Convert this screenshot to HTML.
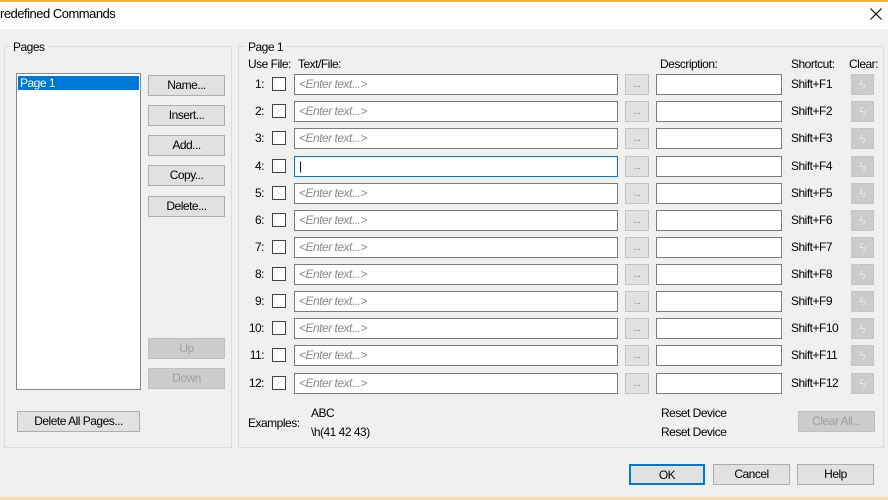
<!DOCTYPE html><html><head><style>
*{box-sizing:border-box;margin:0;padding:0}
body{width:888px;height:500px;background:#f0f0f0;position:relative;overflow:hidden;font-family:"Liberation Sans",sans-serif;font-size:12px;color:#000;letter-spacing:-0.5px}
.a{position:absolute}
.btn{position:absolute;background:#e1e1e1;border:1px solid #adadad;text-align:center;line-height:19px;height:21px}
.dis{color:#a0a0a0;background:#cccccc;border-color:#bfbfbf}
.grp{position:absolute;border:1px solid #dcdcdc}
.in{position:absolute;background:#fff;border:1px solid #7a7a7a;height:21px;width:324px;left:294px;font-style:italic;color:#8a8a8a;padding-left:4px;line-height:19px}
.dd{position:absolute;left:656px;width:126px;height:21px;background:#fff;border:1px solid #7a7a7a}
.el{position:absolute;left:625px;width:24px;height:21px;background:#e1e1e1;border:1px solid #c2c2c2;color:#888;text-align:center;line-height:19px;font-size:10px}
.cb{position:absolute;left:272px;width:14px;height:14px;border:1px solid #444;background:#fff}
.lb{position:absolute;left:240px;width:24px;text-align:right}
.sc{position:absolute;left:791px}
.cl{position:absolute;left:851px;width:23px;height:21px;background:#cccccc;border:1px solid #c4c4c4;color:#e6e6e6;text-align:center;font-size:13px;line-height:19px}
</style></head><body>
<div class="a" style="left:0;top:0;width:888px;height:2px;background:#f0b040"></div>
<div class="a" style="left:0;top:2px;width:888px;height:27px;background:#fff"></div>
<div class="a" style="left:0;top:6px;font-size:13px">redefined Commands</div>
<svg class="a" style="left:870px;top:8px" width="12" height="12"><path d="M0.5 0.5L11.5 11.5M11.5 0.5L0.5 11.5" stroke="#000" stroke-width="1.1"/></svg>
<div class="a" style="left:0;top:497px;width:888px;height:3px;background:#f5deb0"></div>

<div class="grp" style="left:4px;top:46px;width:228px;height:402px"></div>
<div class="a" style="left:10px;top:40px;background:#f0f0f0;padding:0 3px">Pages</div>
<div class="a" style="left:16px;top:73px;width:125px;height:317px;background:#fff;border:1px solid #828790"></div>
<div class="a" style="left:18px;top:76px;width:121px;height:14px;background:#0078d7;color:#fff;padding-left:2px;line-height:14px">Page 1</div>
<div class="btn" style="left:148px;top:75px;width:77px">Name...</div>
<div class="btn" style="left:148px;top:105px;width:77px">Insert...</div>
<div class="btn" style="left:148px;top:135px;width:77px">Add...</div>
<div class="btn" style="left:148px;top:165px;width:77px">Copy...</div>
<div class="btn" style="left:148px;top:196px;width:77px">Delete...</div>
<div class="btn dis" style="left:148px;top:338px;width:77px">Up</div>
<div class="btn dis" style="left:148px;top:368px;width:77px">Down</div>
<div class="btn" style="left:17px;top:411px;width:123px">Delete All Pages...</div>

<div class="grp" style="left:238px;top:46px;width:646px;height:402px"></div>
<div class="a" style="left:245px;top:40px;background:#f0f0f0;padding:0 3px">Page 1</div>
<div class="a" style="left:248px;top:57px">Use File:</div>
<div class="a" style="left:298px;top:57px">Text/File:</div>
<div class="a" style="left:660px;top:57px">Description:</div>
<div class="a" style="left:791px;top:57px">Shortcut:</div>
<div class="a" style="left:849px;top:57px">Clear:</div>

<div class="lb" style="top:77px">1:</div><div class="cb" style="top:77px"></div><div class="in" style="top:74px">&lt;Enter text...&gt;</div><div class="el" style="top:74px">...</div><div class="dd" style="top:74px"></div><div class="sc" style="top:77px">Shift+F1</div><div class="cl" style="top:74px">ϟ</div>
<div class="lb" style="top:104px">2:</div><div class="cb" style="top:104px"></div><div class="in" style="top:101px">&lt;Enter text...&gt;</div><div class="el" style="top:101px">...</div><div class="dd" style="top:101px"></div><div class="sc" style="top:104px">Shift+F2</div><div class="cl" style="top:101px">ϟ</div>
<div class="lb" style="top:131px">3:</div><div class="cb" style="top:131px"></div><div class="in" style="top:128px">&lt;Enter text...&gt;</div><div class="el" style="top:128px">...</div><div class="dd" style="top:128px"></div><div class="sc" style="top:131px">Shift+F3</div><div class="cl" style="top:128px">ϟ</div>
<div class="lb" style="top:159px">4:</div><div class="cb" style="top:159px"></div><div class="in" style="top:156px;border-color:#0078d7;color:#000;font-style:normal">|</div><div class="el" style="top:156px">...</div><div class="dd" style="top:156px"></div><div class="sc" style="top:159px">Shift+F4</div><div class="cl" style="top:156px">ϟ</div>
<div class="lb" style="top:186px">5:</div><div class="cb" style="top:186px"></div><div class="in" style="top:183px">&lt;Enter text...&gt;</div><div class="el" style="top:183px">...</div><div class="dd" style="top:183px"></div><div class="sc" style="top:186px">Shift+F5</div><div class="cl" style="top:183px">ϟ</div>
<div class="lb" style="top:213px">6:</div><div class="cb" style="top:213px"></div><div class="in" style="top:210px">&lt;Enter text...&gt;</div><div class="el" style="top:210px">...</div><div class="dd" style="top:210px"></div><div class="sc" style="top:213px">Shift+F6</div><div class="cl" style="top:210px">ϟ</div>
<div class="lb" style="top:240px">7:</div><div class="cb" style="top:240px"></div><div class="in" style="top:237px">&lt;Enter text...&gt;</div><div class="el" style="top:237px">...</div><div class="dd" style="top:237px"></div><div class="sc" style="top:240px">Shift+F7</div><div class="cl" style="top:237px">ϟ</div>
<div class="lb" style="top:267px">8:</div><div class="cb" style="top:267px"></div><div class="in" style="top:264px">&lt;Enter text...&gt;</div><div class="el" style="top:264px">...</div><div class="dd" style="top:264px"></div><div class="sc" style="top:267px">Shift+F8</div><div class="cl" style="top:264px">ϟ</div>
<div class="lb" style="top:294px">9:</div><div class="cb" style="top:294px"></div><div class="in" style="top:291px">&lt;Enter text...&gt;</div><div class="el" style="top:291px">...</div><div class="dd" style="top:291px"></div><div class="sc" style="top:294px">Shift+F9</div><div class="cl" style="top:291px">ϟ</div>
<div class="lb" style="top:321px">10:</div><div class="cb" style="top:321px"></div><div class="in" style="top:318px">&lt;Enter text...&gt;</div><div class="el" style="top:318px">...</div><div class="dd" style="top:318px"></div><div class="sc" style="top:321px">Shift+F10</div><div class="cl" style="top:318px">ϟ</div>
<div class="lb" style="top:348px">11:</div><div class="cb" style="top:348px"></div><div class="in" style="top:345px">&lt;Enter text...&gt;</div><div class="el" style="top:345px">...</div><div class="dd" style="top:345px"></div><div class="sc" style="top:348px">Shift+F11</div><div class="cl" style="top:345px">ϟ</div>
<div class="lb" style="top:376px">12:</div><div class="cb" style="top:376px"></div><div class="in" style="top:373px">&lt;Enter text...&gt;</div><div class="el" style="top:373px">...</div><div class="dd" style="top:373px"></div><div class="sc" style="top:376px">Shift+F12</div><div class="cl" style="top:373px">ϟ</div>

<div class="a" style="left:248px;top:416px">Examples:</div>
<div class="a" style="left:311px;top:406px">ABC</div>
<div class="a" style="left:311px;top:425px">\h(41 42 43)</div>
<div class="a" style="left:661px;top:406px">Reset Device</div>
<div class="a" style="left:661px;top:425px">Reset Device</div>
<div class="btn dis" style="left:798px;top:411px;width:77px">Clear All...</div>

<div class="btn" style="left:629px;top:464px;width:76px;border:2px solid #0078d7;line-height:18px">OK</div>
<div class="btn" style="left:713px;top:464px;width:77px">Cancel</div>
<div class="btn" style="left:797px;top:464px;width:77px">Help</div>
</body></html>
